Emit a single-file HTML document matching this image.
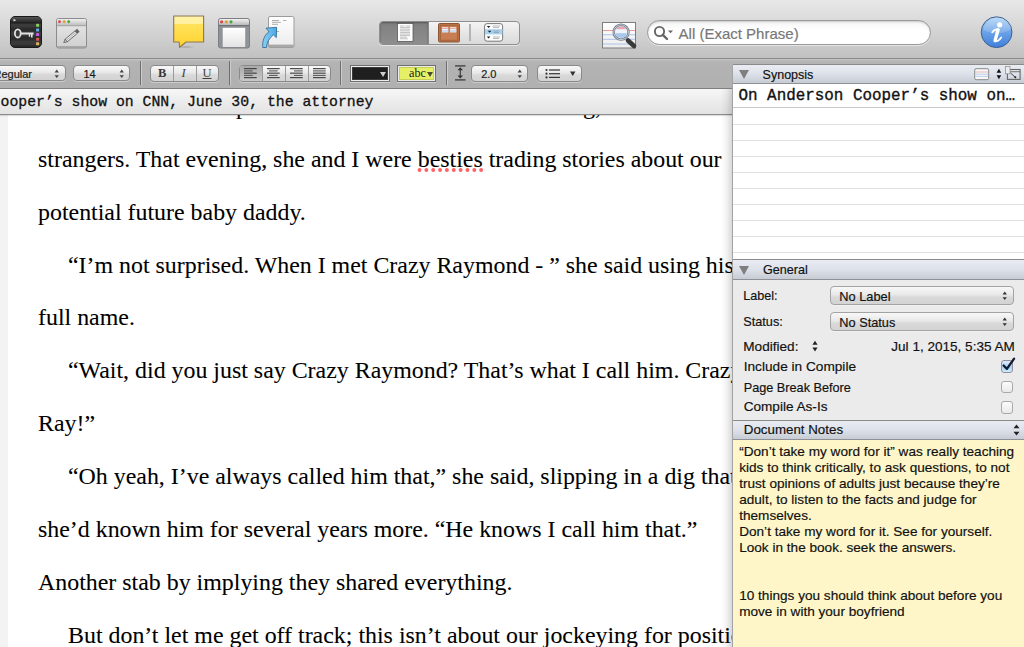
<!DOCTYPE html>
<html><head><meta charset="utf-8">
<style>
*{margin:0;padding:0;box-sizing:border-box}
html,body{width:1024px;height:647px;overflow:hidden;background:#fff;font-family:"Liberation Sans",sans-serif}
.a{position:absolute}
.t0{position:absolute;white-space:nowrap;line-height:0;height:0}
svg{position:absolute;overflow:visible}
.ln{position:absolute;white-space:nowrap;font-family:"Liberation Serif",serif;font-size:23.9px;color:#000;line-height:0;height:0;-webkit-text-stroke:0.08px #000}
.sp{text-decoration:underline dotted #e03030;text-decoration-thickness:2px;text-underline-offset:5px}
.pop{position:absolute;border:1px solid #8a8a8a;border-radius:4px;background:linear-gradient(#f8f8f8,#e9e9e9 45%,#d9d9d9 60%,#d3d3d3);box-shadow:0 1px 0 rgba(255,255,255,.35)}
.sep{position:absolute;width:1px;background:#6e6e6e;box-shadow:1px 0 0 rgba(255,255,255,.35)}
.hdr{position:absolute;left:733px;width:291px;background:linear-gradient(#e9ecf3,#dde1e9 50%,#c7cbd4);border-top:1px solid #8a8a8a;border-bottom:1px solid #8f9196}
.tri{position:absolute;width:0;height:0;border-left:5.5px solid transparent;border-right:5.5px solid transparent;border-top:9px solid #7f7f7f}
.ui{color:#111}
.chk{position:absolute;width:13px;height:13px;border:1px solid #a9a9a9;border-radius:3px;background:linear-gradient(#fcfcfc,#e9e9e9)}
</style></head><body>
<div class="a" style="left:0;top:0;width:1024px;height:59px;background:linear-gradient(#e8e8e8,#d7d7d7 45%,#c1c1c1);border-bottom:1px solid #8a8a8a"></div>
<svg style="left:10px;top:16px" width="32" height="32" viewBox="0 0 32 32">
<defs><linearGradient id="k1" x1="0" y1="0" x2="0" y2="1"><stop offset="0" stop-color="#555"/><stop offset="1" stop-color="#262626"/></linearGradient></defs>
<rect x="0.5" y="0.5" width="31" height="31" rx="4.5" fill="#2c2c2c" stroke="#1a1a1a"/>
<rect x="1" y="1" width="30" height="5.5" rx="4" fill="url(#k1)"/>
<rect x="1" y="7" width="30" height="4.5" fill="#3a3a3a"/>
<rect x="1" y="15.5" width="30" height="4.5" fill="#3a3a3a"/>
<rect x="1" y="24.5" width="30" height="4.5" fill="#3a3a3a"/>
<rect x="1" y="6.5" width="30" height="1" fill="#1b1b1b"/>
<path d="M3.5 2.8 L6.3 4.2 L3.5 5.6Z" fill="#ddd"/>
<ellipse cx="7.8" cy="17.4" rx="2.9" ry="4.1" fill="none" stroke="#e2e2e2" stroke-width="1.8"/>
<path d="M10.6 16.4 H23.6 V18.5 H22.6 V21.5 H21 V18.5 H20.2 V20.8 H18.8 V18.5 H10.6Z" fill="#e2e2e2"/>
<rect x="26.1" y="7.8" width="3" height="3" rx="0.6" fill="#86cf5c"/>
<rect x="26.1" y="12.4" width="3" height="3" rx="0.6" fill="#5ab0ea"/>
<rect x="26.1" y="17.1" width="3" height="3" rx="0.6" fill="#c45ce0"/>
<rect x="26.1" y="21.7" width="3" height="3" rx="0.6" fill="#de5656"/>
<rect x="26.1" y="26.3" width="3" height="3" rx="0.6" fill="#e3b25a"/>
</svg>
<svg style="left:56px;top:18px" width="31" height="31" viewBox="0 0 31 31">
<defs><linearGradient id="w2" x1="0" y1="0" x2="0" y2="1"><stop offset="0" stop-color="#f0f0f0"/><stop offset="1" stop-color="#bdbdbd"/></linearGradient>
<linearGradient id="b2" x1="0" y1="0" x2="0" y2="1"><stop offset="0" stop-color="#e9e9e9"/><stop offset="1" stop-color="#cfcfcf"/></linearGradient></defs>
<rect x="0.5" y="0.5" width="30" height="29.5" rx="2" fill="url(#b2)" stroke="#8b8b8b"/>
<rect x="1" y="1" width="29" height="6.5" rx="1.5" fill="url(#w2)"/>
<rect x="1" y="7.3" width="29" height="0.9" fill="#9a9a9a"/>
<rect x="1" y="28.2" width="29" height="1.6" fill="#9e9e9e"/>
<circle cx="3.5" cy="3.7" r="1.45" fill="#df4a4a"/><circle cx="8.2" cy="3.7" r="1.45" fill="#e0a030"/><circle cx="12.7" cy="3.7" r="1.45" fill="#4aa83a"/>
<g transform="translate(15.2,18.3) rotate(-40)"><rect x="-6.5" y="-1.7" width="13" height="3.4" fill="#e6e6e6" stroke="#5a5a5a" stroke-width="0.8"/><rect x="6.5" y="-1.9" width="2.8" height="3.8" fill="#5f5f5f"/><path d="M-6.5 -1.7 L-9.7 0 L-6.5 1.7Z" fill="#e0e0e0" stroke="#5a5a5a" stroke-width="0.8" stroke-linejoin="round"/><line x1="-6.5" y1="0" x2="6.5" y2="0" stroke="#9a9a9a" stroke-width="0.6"/></g>
</svg>
<svg style="left:173px;top:15px" width="32" height="34" viewBox="0 0 32 34">
<defs><linearGradient id="y3" x1="0" y1="0" x2="0" y2="1"><stop offset="0" stop-color="#fff3a6"/><stop offset="0.25" stop-color="#fff0a0"/><stop offset="0.27" stop-color="#ffe25a"/><stop offset="1" stop-color="#ffd22e"/></linearGradient>
<radialGradient id="sh3"><stop offset="0" stop-color="#888" stop-opacity="0.6"/><stop offset="1" stop-color="#888" stop-opacity="0"/></radialGradient></defs>
<ellipse cx="13" cy="32" rx="9" ry="1.6" fill="url(#sh3)"/>
<path d="M0.7 1 H30.6 V27 H13.2 L6.6 32.3 L6.2 27 H0.7Z" fill="url(#y3)" stroke="#8e7658" stroke-width="1.1" stroke-linejoin="round"/>
</svg>
<svg style="left:218px;top:18px" width="32" height="31" viewBox="0 0 32 31">
<defs><linearGradient id="w4" x1="0" y1="0" x2="0" y2="1"><stop offset="0" stop-color="#f2f2f2"/><stop offset="1" stop-color="#b9b9b9"/></linearGradient>
<linearGradient id="i4" x1="0" y1="0" x2="0" y2="1"><stop offset="0" stop-color="#ffffff"/><stop offset="1" stop-color="#e3e3e3"/></linearGradient></defs>
<rect x="0.5" y="0.5" width="31" height="29.5" rx="2" fill="#8f9398" stroke="#7c7f84"/>
<rect x="1" y="1" width="30" height="6" rx="1.5" fill="url(#w4)"/>
<rect x="1" y="7" width="30" height="1.2" fill="#6d7075"/>
<rect x="4.7" y="9.8" width="22.5" height="19.2" fill="url(#i4)"/>
<circle cx="3.6" cy="3.8" r="1.6" fill="#e04848"/><circle cx="8.3" cy="3.8" r="1.6" fill="#e0a030"/><circle cx="13" cy="3.8" r="1.6" fill="#4aa83a"/>
</svg>
<svg style="left:262px;top:16px" width="33" height="33" viewBox="0 0 33 33">
<defs><linearGradient id="p5" x1="0" y1="0" x2="0" y2="1"><stop offset="0" stop-color="#ffffff"/><stop offset="1" stop-color="#ebebeb"/></linearGradient>
<linearGradient id="a5" x1="0" y1="0" x2="1" y2="0"><stop offset="0" stop-color="#8fd0f5"/><stop offset="1" stop-color="#4aa6e6"/></linearGradient></defs>
<rect x="6.5" y="0.5" width="25.5" height="31" rx="1.5" fill="url(#p5)" stroke="#9c9c9c"/>
<rect x="7" y="28.6" width="24.5" height="2.6" fill="#a8a8a8"/>
<path d="M10 4.5h7M10 6.3h9M10 8.3h6M21 4.5h3.5M10 15.5h7M10 17.3h5" stroke="#9a9a9a" stroke-width="0.8"/>
<path d="M0.8 31.5 C0.2 25 2.2 19.3 7 15.6 L4 12.2 L14.6 11.3 L14.3 21.6 L11.4 18.8 C7.6 22 4.8 26 4.4 31.5Z" fill="url(#a5)" stroke="#2f6f99" stroke-width="0.9" stroke-linejoin="round"/>
</svg>
<div class="a" style="left:379px;top:21px;width:141px;height:24px;border:1px solid #8f8f8f;border-radius:4px;background:linear-gradient(#f4f4f4,#e6e6e6 50%,#dadada);overflow:hidden;box-shadow:0 1px 0 rgba(255,255,255,.5)">
<div class="a" style="left:0;top:0;width:48px;height:22px;background:linear-gradient(#7f7f7f,#8e8e8e);box-shadow:inset 0 1px 2px rgba(0,0,0,.35)"></div>
<div class="a" style="left:48px;top:0;width:1px;height:22px;background:#8a8a8a"></div>
</div>
<svg style="left:397px;top:23px" width="17" height="19" viewBox="0 0 17 19">
<rect x="0.5" y="0.5" width="15.5" height="17.8" fill="#fff" stroke="#4a4a4a" stroke-width="0.7"/>
<path d="M3 3h4.5M8.5 3h5M3 4.6h10M3 6.2h10M3 7.8h10M3 9.4h10M3 11h10M3 12.6h10M3 14.2h7M3 15.8h8" stroke="#8a8a8a" stroke-width="0.55"/>
</svg>
<svg style="left:438px;top:23px" width="22" height="20" viewBox="0 0 22 20">
<rect x="0.5" y="0.5" width="21" height="18.5" rx="1.2" fill="#c07448" stroke="#8d5532"/>
<rect x="2.3" y="2.3" width="17.4" height="14.9" fill="#c97d52" stroke="#99603a" stroke-width="0.8"/>
<rect x="4" y="4.3" width="6.2" height="5" fill="#f4f8fb"/><rect x="4" y="5.3" width="6.2" height="0.8" fill="#e58b8b"/><rect x="4" y="7" width="6.2" height="2.3" fill="#c9def2"/>
<rect x="12" y="4.3" width="6.2" height="5" fill="#f4f8fb"/><rect x="12" y="5.3" width="6.2" height="0.8" fill="#e58b8b"/><rect x="12" y="7" width="6.2" height="2.3" fill="#c9def2"/>
</svg>
<div class="a" style="left:469px;top:24px;width:2px;height:17px;background:#b4b4b4"></div>
<svg style="left:484px;top:23px" width="20" height="20" viewBox="0 0 20 20">
<rect x="0.6" y="0.6" width="18" height="17.6" rx="2.5" fill="#fdfdfd" stroke="#6a6a6a" stroke-width="0.9"/>
<rect x="1" y="6.2" width="17.4" height="5.2" fill="#a9d3f3"/>
<path d="M2.8 3 L6.4 3 L4.6 5Z M3.8 7.8 L7.4 7.8 L5.6 9.8Z M2.8 13.6 L6.4 13.6 L4.6 15.6Z" fill="#1e1e1e"/>
<path d="M8.5 3h7.5M9 4.6h6M9.5 8h6M9.5 9.5h5.5M9 14h7M9 15.5h6" stroke="#8a8a8a" stroke-width="0.6"/>
</svg>
<svg style="left:602px;top:22px" width="36" height="28" viewBox="0 0 36 28">
<defs><clipPath id="lc"><circle cx="19.1" cy="10.2" r="5.9"/></clipPath>
<linearGradient id="cg" x1="0" y1="0" x2="0" y2="1"><stop offset="0" stop-color="#ffffff"/><stop offset="1" stop-color="#ececec"/></linearGradient></defs>
<rect x="0.5" y="0.5" width="33" height="25.5" fill="url(#cg)" stroke="#7d7d7d"/>
<path d="M1 8.5h32" stroke="#e99a9a" stroke-width="1"/>
<path d="M1 12.8h32M1 17.3h32M1 22h32" stroke="#a9c4e9" stroke-width="1"/>
<path d="M26 18.5 L32 24" stroke="#3a3a3a" stroke-width="4.6" stroke-linecap="round"/>
<circle cx="19.1" cy="10.2" r="7.4" fill="#eef4fa" stroke="#6f7c8a" stroke-width="2.4"/>
<circle cx="19.1" cy="10.2" r="7.4" fill="none" stroke="#d5e0ea" stroke-width="0.8"/>
<g clip-path="url(#lc)"><rect x="12" y="3" width="15" height="4.2" fill="#e9a5ad"/><rect x="12" y="11.2" width="15" height="5" fill="#a9c8ee"/></g>
</svg>
<div class="a" style="left:647px;top:20px;width:284px;height:25px;border:1px solid #9a9a9a;border-radius:12.5px;background:linear-gradient(#f4f4f4,#ffffff 40%);box-shadow:inset 0 1px 2px rgba(0,0,0,.18),0 1px 0 rgba(255,255,255,.5)"></div>
<svg style="left:653px;top:25px" width="22" height="16" viewBox="0 0 22 16">
<circle cx="6.5" cy="6.5" r="4.6" fill="none" stroke="#666" stroke-width="1.9"/>
<path d="M9.8 9.8 L14 14" stroke="#666" stroke-width="2.4" stroke-linecap="round"/>
<path d="M15 5.5 L20 5.5 L17.5 8.3Z" fill="#666"/>
</svg>
<div class="t0" style="left:678.6px;top:33.90px;font-family:'Liberation Sans';font-size:15px;color:#777777;-webkit-text-stroke:0.18px #777777;">All (Exact Phrase)</div>
<svg style="left:980px;top:16px" width="34" height="34" viewBox="0 0 34 34">
<defs><linearGradient id="ib" x1="0" y1="0" x2="0" y2="1"><stop offset="0" stop-color="#b3d6f7"/><stop offset="0.45" stop-color="#6fa6e8"/><stop offset="1" stop-color="#3f7fdc"/></linearGradient></defs>
<circle cx="16.6" cy="16.2" r="15.4" fill="url(#ib)" stroke="#3d5f8e" stroke-width="1"/>
<path d="M3 13.5 C6 5 13 1.5 17 1.5 C25 1.5 30.5 7 31.6 13 C24 18 12 19 3 13.5Z" fill="#fff" fill-opacity="0.16"/>
<circle cx="19.7" cy="8.8" r="2.6" fill="#fff"/>
<path d="M12.2 16.4 C13.8 14.1 16.3 13.1 18.4 13.6" stroke="#fff" stroke-width="1.7" fill="none" stroke-linecap="round"/>
<path d="M18.1 13.8 L15.1 24.4" stroke="#fff" stroke-width="3.4" stroke-linecap="round"/>
<path d="M14.6 25.3 C17 25.6 19.6 23.7 21.2 21.4" stroke="#fff" stroke-width="1.7" fill="none" stroke-linecap="round"/>
</svg>
<div class="a" style="left:0;top:59px;width:1024px;height:30px;background:linear-gradient(#bababa,#b3b3b3 10%,#b0b0b0);border-top:1px solid #c4c4c4;border-bottom:1px solid #7f7f7f"></div>
<div class="pop" style="left:-10px;top:65px;width:76px;height:16px"></div>
<div class="t0" style="left:-6.5px;top:73.79px;font-family:'Liberation Sans';font-size:11px;color:#1a1a1a;-webkit-text-stroke:0.18px #1a1a1a;">Regular</div>
<svg style="left:54.3px;top:68.8px" width="6" height="10" viewBox="0 0 6 10"><path d="M0.6 3.4 L2.75 0.6 L4.9 3.4Z M0.6 6.2 L2.75 9 L4.9 6.2Z" fill="#444"/></svg>
<div class="pop" style="left:73px;top:65px;width:57px;height:16px"></div>
<div class="t0" style="left:83.5px;top:73.79px;font-family:'Liberation Sans';font-size:11px;color:#1a1a1a;-webkit-text-stroke:0.18px #1a1a1a;">14</div>
<svg style="left:118.8px;top:68.8px" width="6" height="10" viewBox="0 0 6 10"><path d="M0.6 3.4 L2.75 0.6 L4.9 3.4Z M0.6 6.2 L2.75 9 L4.9 6.2Z" fill="#444"/></svg>
<div class="sep" style="left:140px;top:61px;height:24px"></div>
<div class="pop" style="left:150px;top:65px;width:69px;height:17px"></div>
<div class="a" style="left:173px;top:66px;width:1px;height:15px;background:#9a9a9a"></div>
<div class="a" style="left:196px;top:66px;width:1px;height:15px;background:#9a9a9a"></div>
<div class="t0" style="left:158px;top:73.38px;font-family:'Liberation Serif';font-size:12.5px;color:#383838;font-weight:bold">B</div>
<div class="t0" style="left:181.5px;top:73.38px;font-family:'Liberation Serif';font-size:12.5px;color:#404040;font-style:italic">I</div>
<div class="t0" style="left:202.5px;top:73.38px;font-family:'Liberation Serif';font-size:12.5px;color:#404040;text-decoration:underline;text-underline-offset:1px">U</div>
<div class="sep" style="left:229px;top:61px;height:24px"></div>
<div class="pop" style="left:239px;top:65px;width:92px;height:17px;overflow:hidden"><div class="a" style="left:0;top:0;width:23px;height:15px;background:linear-gradient(#a9a9a9,#c9c9c9)"></div></div>
<div class="a" style="left:262px;top:66px;width:1px;height:15px;background:#9a9a9a"></div>
<div class="a" style="left:285px;top:66px;width:1px;height:15px;background:#9a9a9a"></div>
<div class="a" style="left:308px;top:66px;width:1px;height:15px;background:#9a9a9a"></div>
<svg style="left:244.3px;top:68.3px" width="13" height="11" viewBox="0 0 13 11"><rect x="0.0" y="0.10" width="12.7" height="1.1" fill="#3a3a3a"/><rect x="0.0" y="2.35" width="8.7" height="1.1" fill="#5a5a5a"/><rect x="0.0" y="4.60" width="12.7" height="1.1" fill="#3a3a3a"/><rect x="0.0" y="6.85" width="8.7" height="1.1" fill="#5a5a5a"/><rect x="0.0" y="9.10" width="12.7" height="1.1" fill="#3a3a3a"/></svg>
<svg style="left:267.3px;top:68.3px" width="13" height="11" viewBox="0 0 13 11"><rect x="0.0" y="0.10" width="12.7" height="1.1" fill="#3a3a3a"/><rect x="2.0" y="2.35" width="8.7" height="1.1" fill="#5a5a5a"/><rect x="0.0" y="4.60" width="12.7" height="1.1" fill="#3a3a3a"/><rect x="2.0" y="6.85" width="8.7" height="1.1" fill="#5a5a5a"/><rect x="0.0" y="9.10" width="12.7" height="1.1" fill="#3a3a3a"/></svg>
<svg style="left:290.3px;top:68.3px" width="13" height="11" viewBox="0 0 13 11"><rect x="0.0" y="0.10" width="12.7" height="1.1" fill="#3a3a3a"/><rect x="4.0" y="2.35" width="8.7" height="1.1" fill="#5a5a5a"/><rect x="0.0" y="4.60" width="12.7" height="1.1" fill="#3a3a3a"/><rect x="4.0" y="6.85" width="8.7" height="1.1" fill="#5a5a5a"/><rect x="0.0" y="9.10" width="12.7" height="1.1" fill="#3a3a3a"/></svg>
<svg style="left:313px;top:68.3px" width="13" height="11" viewBox="0 0 13 11"><rect x="0.0" y="0.10" width="12.7" height="1.1" fill="#3a3a3a"/><rect x="0.0" y="2.35" width="12.7" height="1.1" fill="#5a5a5a"/><rect x="0.0" y="4.60" width="12.7" height="1.1" fill="#3a3a3a"/><rect x="0.0" y="6.85" width="12.7" height="1.1" fill="#5a5a5a"/><rect x="0.0" y="9.10" width="12.7" height="1.1" fill="#3a3a3a"/></svg>
<div class="sep" style="left:340px;top:61px;height:24px"></div>
<div class="a" style="left:350px;top:65px;width:40px;height:17px;border:1px solid #707070;background:#ececec;box-shadow:0 1px 0 rgba(255,255,255,.4)"><div class="a" style="left:1px;top:1px;width:36px;height:13px;background:#1f1f1f;border:1px solid #3a3a3a"></div></div>
<svg style="left:379.5px;top:71.5px" width="7" height="6" viewBox="0 0 7 6"><path d="M0 0 L6 0 L3 5Z" fill="#cfcfcf"/></svg>
<div class="a" style="left:397px;top:65px;width:39px;height:17px;border:1px solid #707070;background:#ececec;box-shadow:0 1px 0 rgba(255,255,255,.4)"><div class="a" style="left:1px;top:1px;width:35px;height:13px;background:#e6f066;border:1px solid #c9d050"></div></div>
<div class="t0" style="left:409px;top:73.38px;font-family:'Liberation Serif';font-size:12.2px;color:#1a1a1a;">abc</div>
<svg style="left:426.5px;top:71.5px" width="7" height="6" viewBox="0 0 7 6"><path d="M0 0 L6 0 L3 5Z" fill="#4a4a30"/></svg>
<div class="sep" style="left:446px;top:61px;height:24px"></div>
<svg style="left:455px;top:65px" width="11" height="16" viewBox="0 0 11 16">
<rect x="0" y="0.3" width="10.5" height="1.2" fill="#333"/><rect x="0" y="14.3" width="10.5" height="1.2" fill="#333"/>
<path d="M5.25 2.3 L8 5.3 H2.5Z M5.25 13.5 L8 10.5 H2.5Z" fill="#333"/><rect x="4.7" y="5" width="1.1" height="6" fill="#333"/>
</svg>
<div class="pop" style="left:471px;top:65px;width:57px;height:17px"></div>
<div class="t0" style="left:481.2px;top:73.79px;font-family:'Liberation Sans';font-size:11px;color:#1a1a1a;-webkit-text-stroke:0.18px #1a1a1a;">2.0</div>
<svg style="left:516.5px;top:68.8px" width="6" height="10" viewBox="0 0 6 10"><path d="M0.6 3.4 L2.75 0.6 L4.9 3.4Z M0.6 6.2 L2.75 9 L4.9 6.2Z" fill="#444"/></svg>
<div class="pop" style="left:537px;top:65px;width:45px;height:17px"></div>
<svg style="left:545px;top:68px" width="30" height="12" viewBox="0 0 30 12">
<circle cx="1.5" cy="2" r="1.1" fill="#333"/><circle cx="1.5" cy="5.7" r="1.1" fill="#333"/><circle cx="1.5" cy="9.4" r="1.1" fill="#333"/>
<rect x="4" y="1.4" width="11" height="1.2" fill="#333"/><rect x="4" y="5.1" width="11" height="1.2" fill="#333"/><rect x="4" y="8.8" width="11" height="1.2" fill="#333"/>
<path d="M25 3.6 L30.5 3.6 L27.75 8Z" fill="#333"/>
</svg>
<div class="a" style="left:0;top:115px;width:733px;height:532px;background:#fff;overflow:hidden">
<div class="a" style="left:0;top:0;width:8px;height:532px;background:#f3f3f3"></div>
<div class="ln" style="left:38px;top:43.80px">strangers. That evening, she and I were besties trading stories about our</div>
<div class="ln" style="left:38px;top:96.68px">potential future baby daddy.</div>
<div class="ln" style="left:68px;top:149.56px">“I’m not surprised. When I met Crazy Raymond - ” she said using his</div>
<div class="ln" style="left:38px;top:202.44px">full name.</div>
<div class="ln" style="left:68px;top:255.32px">“Wait, did you just say Crazy Raymond? That’s what I call him. Crazy</div>
<div class="ln" style="left:38px;top:308.20px">Ray!”</div>
<div class="ln" style="left:68px;top:361.08px">“Oh yeah, I’ve always called him that,” she said, slipping in a dig that</div>
<div class="ln" style="left:38px;top:413.96px">she’d known him for several years more. “He knows I call him that.”</div>
<div class="ln" style="left:38px;top:466.84px">Another stab by implying they shared everything.</div>
<div class="ln" style="left:68px;top:519.72px">But don’t let me get off track; this isn’t about our jockeying for position</div>
<div class="ln" style="left:236px;top:-9.099999999999994px">p</div>
<div class="ln" style="left:583px;top:-9.099999999999994px">g,</div>
<svg style="left:410px;top:51px" width="80" height="8" viewBox="0 0 80 8"><circle cx="9.50" cy="4" r="1.95" fill="#ff6262"/><circle cx="16.35" cy="4" r="1.95" fill="#ff6262"/><circle cx="23.20" cy="4" r="1.95" fill="#ff6262"/><circle cx="30.05" cy="4" r="1.95" fill="#ff6262"/><circle cx="36.90" cy="4" r="1.95" fill="#ff6262"/><circle cx="43.75" cy="4" r="1.95" fill="#ff6262"/><circle cx="50.60" cy="4" r="1.95" fill="#ff6262"/><circle cx="57.45" cy="4" r="1.95" fill="#ff6262"/><circle cx="64.30" cy="4" r="1.95" fill="#ff6262"/><circle cx="71.15" cy="4" r="1.95" fill="#ff6262"/></svg>
</div>
<div class="a" style="left:0;top:89px;width:733px;height:26px;background:linear-gradient(#f7f7f7,#ececec 50%,#e3e3e3);border-bottom:1px solid #8c8c8c;box-shadow:0 1px 1px rgba(0,0,0,.12)"></div>
<div class="t0" style="left:0.5px;top:101.76px;font-family:'Liberation Mono';font-size:14.8px;color:#111;-webkit-text-stroke:0.3px #111">ooper’s show on CNN, June 30, the attorney</div>
<div class="a" style="left:721px;top:89px;width:11px;height:558px;background:linear-gradient(90deg,rgba(0,0,0,0),rgba(0,0,0,.05) 50%,rgba(0,0,0,.15))"></div>
<div class="a" style="left:732px;top:65px;width:292px;height:582px;background:#ebebeb;border-left:1px solid #a3a3a3"></div>
<div class="hdr" style="top:64px;height:20px"></div>
<div class="tri" style="left:738.5px;top:70.4px"></div>
<div class="t0" style="left:762.6px;top:75.17px;font-family:'Liberation Sans';font-size:12.5px;color:#111;-webkit-text-stroke:0.18px #111;">Synopsis</div>
<svg style="left:974px;top:68px" width="48" height="14" viewBox="0 0 48 14">
<rect x="0.7" y="0.7" width="14" height="11" rx="1.5" fill="#f7f7f7" stroke="#888" stroke-width="1"/>
<path d="M1.2 4h13" stroke="#eab0b0" stroke-width="0.9"/><path d="M1.2 6.2h13M1.2 8.4h13" stroke="#b3cbe6" stroke-width="0.9"/>
<path d="M22.6 4.8 L24.9 0.8 L27.2 4.8Z M22.6 7.2 L24.9 11.2 L27.2 7.2Z" fill="#111"/>
<rect x="33.4" y="1.5" width="12.7" height="9.9" fill="none" stroke="#666" stroke-width="1.1"/>
<rect x="33.4" y="3.3" width="12.7" height="0.9" fill="#666"/>
<rect x="31.5" y="-1.5" width="4.5" height="7.3" fill="#ececec" stroke="#8a8a8a" stroke-width="0.7"/>
<path d="M36.5 5 L41.2 9.2" stroke="#222" stroke-width="0.8"/><circle cx="41.3" cy="9.2" r="1" fill="#222"/>
</svg>
<div class="a" style="left:733px;top:84px;width:291px;height:175px;background:#fff"></div>
<div class="a" style="left:733px;top:107px;width:291px;height:1px;background:#c9c9c9"></div>
<div class="a" style="left:733px;top:124px;width:291px;height:1px;background:#e2e2e2"></div>
<div class="a" style="left:733px;top:140px;width:291px;height:1px;background:#e2e2e2"></div>
<div class="a" style="left:733px;top:156px;width:291px;height:1px;background:#e2e2e2"></div>
<div class="a" style="left:733px;top:172px;width:291px;height:1px;background:#e2e2e2"></div>
<div class="a" style="left:733px;top:188px;width:291px;height:1px;background:#e2e2e2"></div>
<div class="a" style="left:733px;top:204px;width:291px;height:1px;background:#e2e2e2"></div>
<div class="a" style="left:733px;top:220px;width:291px;height:1px;background:#e2e2e2"></div>
<div class="a" style="left:733px;top:236px;width:291px;height:1px;background:#e2e2e2"></div>
<div class="a" style="left:733px;top:252px;width:291px;height:1px;background:#e2e2e2"></div>
<div class="t0" style="left:738.5px;top:96.43px;font-family:'Liberation Mono';font-size:15.9px;color:#111;-webkit-text-stroke:0.35px #111">On Anderson Cooper’s show on…</div>
<div class="hdr" style="top:259px;height:21px"></div>
<div class="tri" style="left:738.5px;top:266px"></div>
<div class="t0" style="left:763px;top:270.13px;font-family:'Liberation Sans';font-size:12.6px;color:#111;-webkit-text-stroke:0.18px #111;">General</div>
<div class="t0" style="left:743.3px;top:295.63px;font-family:'Liberation Sans';font-size:12.6px;color:#111;-webkit-text-stroke:0.18px #111;">Label:</div>
<div class="pop" style="left:830px;top:286px;width:184px;height:19px;border-color:#a3a3a3"></div>
<div class="t0" style="left:839.3px;top:296.56px;font-family:'Liberation Sans';font-size:12.8px;color:#111;-webkit-text-stroke:0.18px #111;">No Label</div>
<svg style="left:1001.8px;top:291px" width="6" height="10" viewBox="0 0 6 10"><path d="M0.6 3.4 L2.75 0.6 L4.9 3.4Z M0.6 6.2 L2.75 9 L4.9 6.2Z" fill="#333"/></svg>
<div class="t0" style="left:743.3px;top:321.50px;font-family:'Liberation Sans';font-size:12.7px;color:#111;-webkit-text-stroke:0.18px #111;">Status:</div>
<div class="pop" style="left:830px;top:312px;width:184px;height:19px;border-color:#a3a3a3"></div>
<div class="t0" style="left:839.3px;top:322.58px;font-family:'Liberation Sans';font-size:12.75px;color:#111;-webkit-text-stroke:0.18px #111;">No Status</div>
<svg style="left:1001.8px;top:317px" width="6" height="10" viewBox="0 0 6 10"><path d="M0.6 3.4 L2.75 0.6 L4.9 3.4Z M0.6 6.2 L2.75 9 L4.9 6.2Z" fill="#333"/></svg>
<div class="t0" style="left:743.3px;top:346.79px;font-family:'Liberation Sans';font-size:13.6px;color:#111;-webkit-text-stroke:0.18px #111;">Modified:</div>
<svg style="left:812px;top:340px" width="7" height="13" viewBox="0 0 7 13"><path d="M0.4 4.8 L3 0.8 L5.6 4.8Z M0.4 7.6 L3 11.6 L5.6 7.6Z" fill="#222"/></svg>
<div class="t0" style="left:891.3px;top:347.10px;font-family:'Liberation Sans';font-size:13.55px;color:#111;-webkit-text-stroke:0.18px #111;">Jul 1, 2015, 5:35 AM</div>
<div class="t0" style="left:743.7px;top:367.07px;font-family:'Liberation Sans';font-size:13.66px;color:#111;-webkit-text-stroke:0.18px #111;">Include in Compile</div>
<div class="t0" style="left:743.7px;top:387.50px;font-family:'Liberation Sans';font-size:12.7px;color:#111;-webkit-text-stroke:0.18px #111;">Page Break Before</div>
<div class="t0" style="left:743.7px;top:407.29px;font-family:'Liberation Sans';font-size:13.58px;color:#111;-webkit-text-stroke:0.18px #111;">Compile As-Is</div>
<div class="chk" style="left:1000.6px;top:360.2px;width:12.8px;height:12.4px;background:linear-gradient(#dcecfa,#a9d1f3 55%,#cdeefb);border-color:#948da0"></div>
<svg style="left:1000px;top:355px" width="16" height="18" viewBox="0 0 16 18"><path d="M3.6 10.5 L6.9 13.9 L14.1 3.6" fill="none" stroke="#111a2e" stroke-width="2.3" stroke-linecap="round" stroke-linejoin="round"/></svg>
<div class="chk" style="left:1000.6px;top:380.6px;width:12.8px;height:12.6px"></div>
<div class="chk" style="left:1000.6px;top:401.2px;width:12.8px;height:12.6px"></div>
<div class="hdr" style="top:420px;height:20px"></div>
<div class="t0" style="left:743.8px;top:430.38px;font-family:'Liberation Sans';font-size:13.33px;color:#111;-webkit-text-stroke:0.18px #111;">Document Notes</div>
<svg style="left:1013px;top:424px" width="7" height="12" viewBox="0 0 7 12"><path d="M0.5 4.3 L3.5 0.5 L6.5 4.3Z M0.5 7.7 L3.5 11.5 L6.5 7.7Z" fill="#222"/></svg>
<div class="a" style="left:733px;top:440px;width:291px;height:207px;background:#fef6c8"></div>
<div class="t0" style="left:739.2px;top:451.89px;font-family:'Liberation Sans';font-size:13.6px;color:#111;-webkit-text-stroke:0.18px #111;">“Don’t take my word for it” was really teaching</div>
<div class="t0" style="left:739.2px;top:467.89px;font-family:'Liberation Sans';font-size:13.6px;color:#111;-webkit-text-stroke:0.18px #111;">kids to think critically, to ask questions, to not</div>
<div class="t0" style="left:739.2px;top:483.89px;font-family:'Liberation Sans';font-size:13.6px;color:#111;-webkit-text-stroke:0.18px #111;">trust opinions of adults just because they’re</div>
<div class="t0" style="left:739.2px;top:499.89px;font-family:'Liberation Sans';font-size:13.6px;color:#111;-webkit-text-stroke:0.18px #111;">adult, to listen to the facts and judge for</div>
<div class="t0" style="left:739.2px;top:515.89px;font-family:'Liberation Sans';font-size:13.6px;color:#111;-webkit-text-stroke:0.18px #111;">themselves.</div>
<div class="t0" style="left:739.2px;top:531.89px;font-family:'Liberation Sans';font-size:13.6px;color:#111;-webkit-text-stroke:0.18px #111;">Don’t take my word for it. See for yourself.</div>
<div class="t0" style="left:739.2px;top:547.89px;font-family:'Liberation Sans';font-size:13.6px;color:#111;-webkit-text-stroke:0.18px #111;">Look in the book. seek the answers.</div>
<div class="t0" style="left:739.2px;top:595.89px;font-family:'Liberation Sans';font-size:13.6px;color:#111;-webkit-text-stroke:0.18px #111;">10 things you should think about before you</div>
<div class="t0" style="left:739.2px;top:611.89px;font-family:'Liberation Sans';font-size:13.6px;color:#111;-webkit-text-stroke:0.18px #111;">move in with your boyfriend</div>
</body></html>
